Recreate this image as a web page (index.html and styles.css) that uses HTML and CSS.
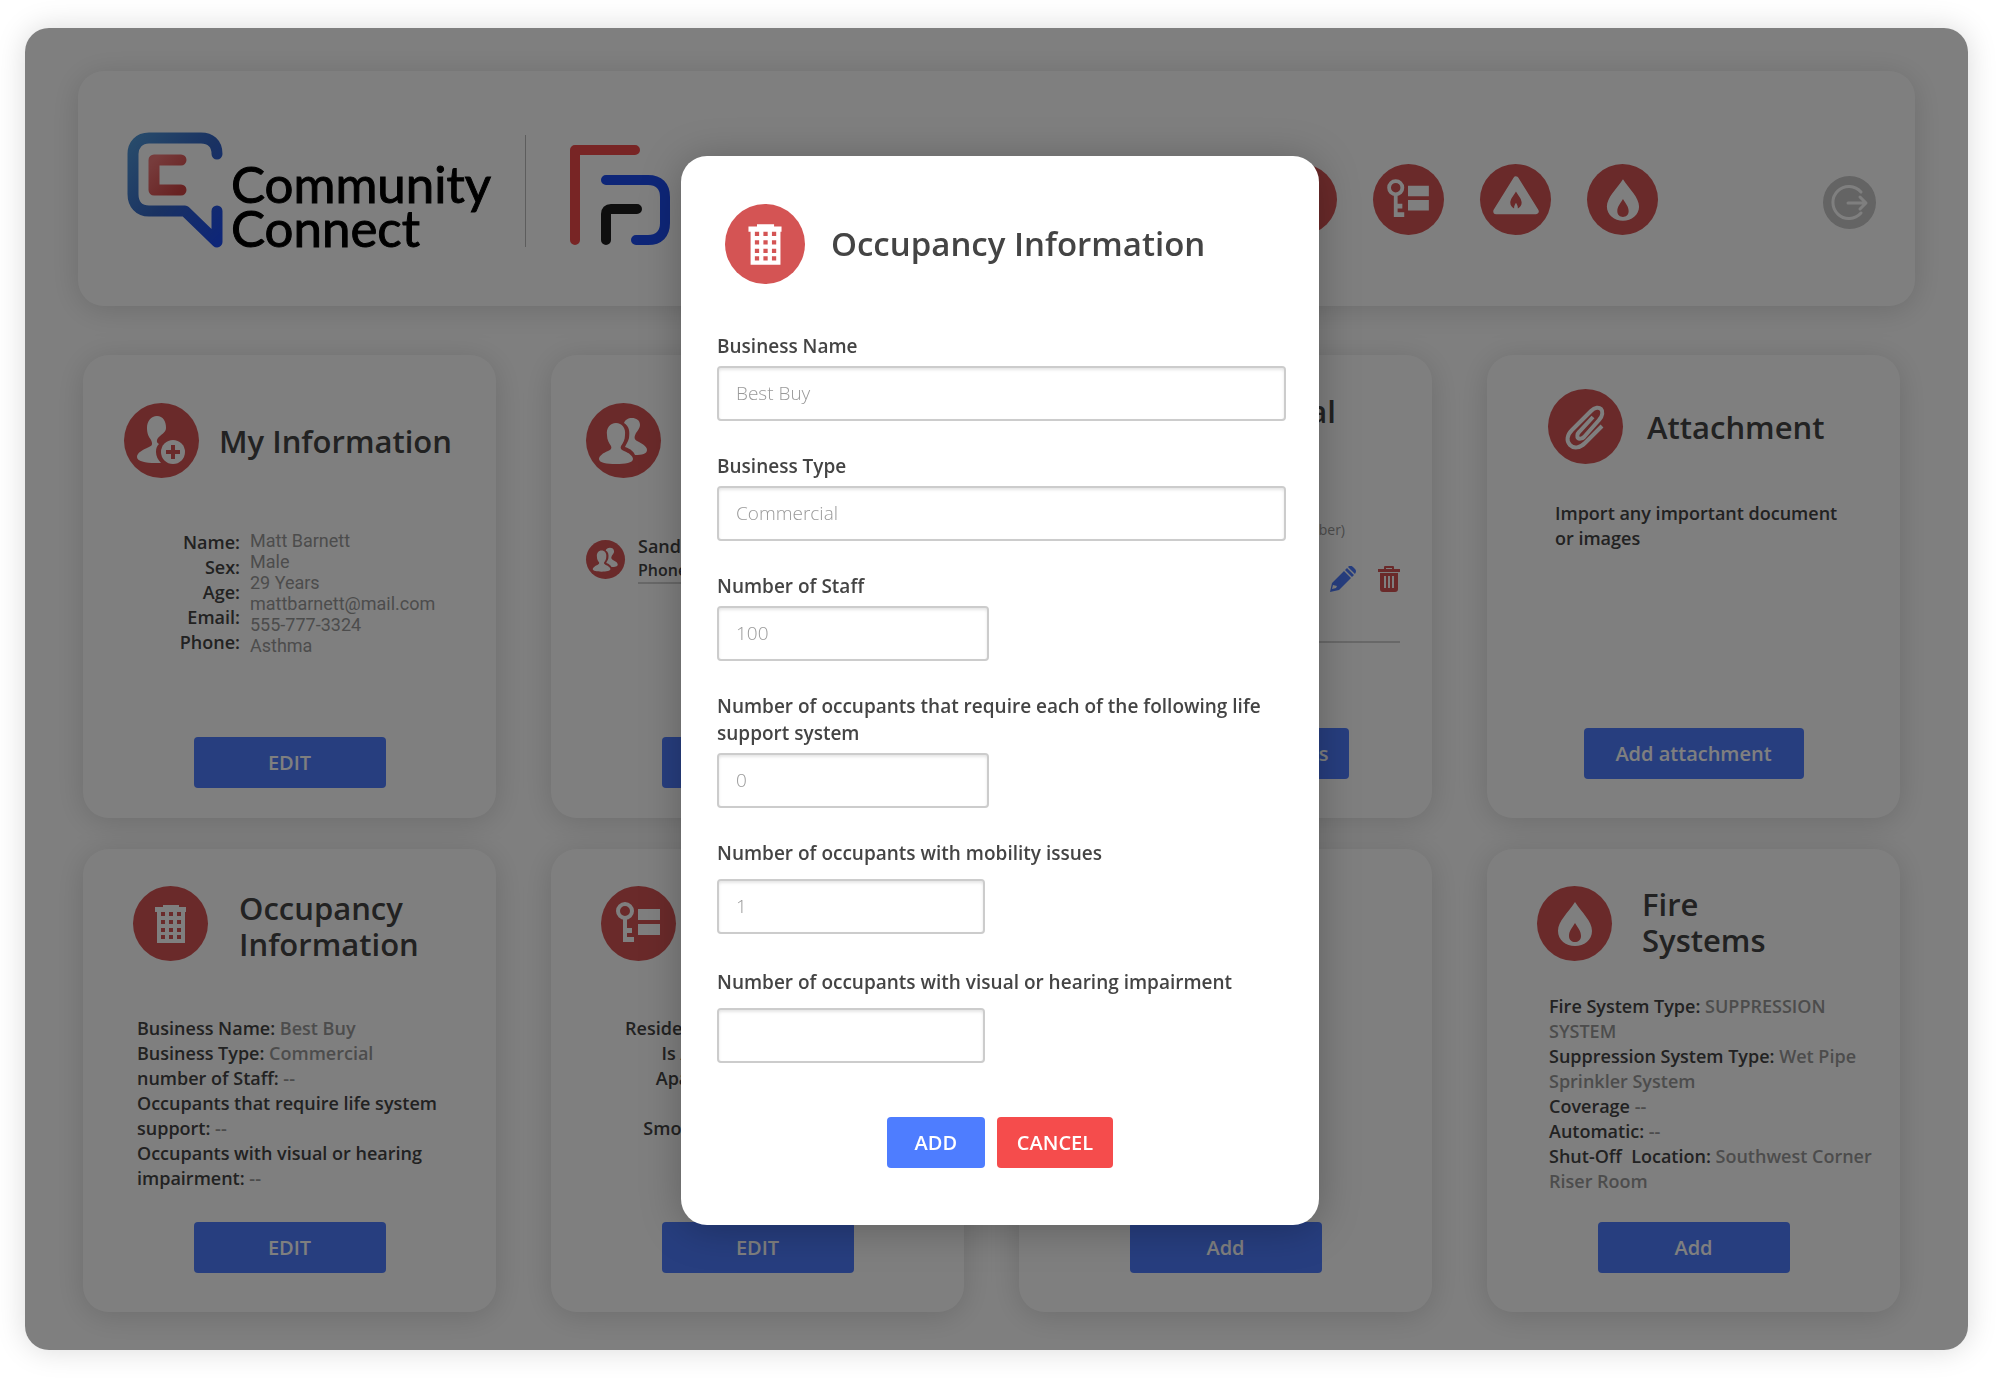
FILE: index.html
```html
<!DOCTYPE html>
<html lang="en">
<head>
    <meta charset="UTF-8">
    <meta name="viewport" content="width=device-width, initial-scale=1.0">
    <title>Community Connect</title>
    <link rel="stylesheet" href="styles.css">
</head>
<body>
    <!-- Shared icon shapes, all drawn in a 75x75 box -->
    <svg class="sprite" aria-hidden="true">
        <symbol id="icon-user-add" viewBox="0 0 75 75">
            <path fill="#fff" d="M33 13c-6 0-10 5-10 12 0 6 2 9 4 12 2 4 1 6-2 7-7 3-12 6-12 10 0 4 8 6 19 6h5c-3-3-5-7-5-11 0-4 1-6 3-8-2-1-3-3-1-6 2-3 8-5 8-10 0-7-3-12-9-12z"/>
            <circle cx="49" cy="49" r="12" fill="#fff"/>
            <path stroke="#d45454" stroke-width="4" d="M42 49h14M49 42v14"/>
        </symbol>
        <symbol id="icon-users" viewBox="0 0 75 75">
            <path fill="#fff" d="M46 15c-4 0-7 2-8 5 5 3 6 8 5 15-1 4-3 6-4 9 6 2 9 5 10 8 7 0 12-1 12-5 0-4-6-7-10-9-3-2-3-4-1-8 2-3 4-5 4-8 0-5-4-7-8-7z"/>
            <path fill="#fff" d="M30 20c-6 0-10 5-9 12 0 5 2 8 4 11 1 2 0 4-3 5-5 2-9 5-9 8 0 4 8 5 17 5s17-1 17-5c0-3-4-6-9-8-3-1-4-3-3-5 2-3 4-6 4-11 1-7-3-12-9-12z"/>
        </symbol>
        <symbol id="icon-building" viewBox="0 0 75 75">
            <path fill="#fff" fill-rule="evenodd" d="M30 19h16v2h7v5h-1v31H24V26h-2v-5h8zM28 26v4h4v-4zm8 0v4h4v-4zm8 0v4h4v-4zM28 34v4h4v-4zm8 0v4h4v-4zm8 0v4h4v-4zM28 42v4h4v-4zm8 0v4h4v-4zm8 0v4h4v-4zM28 49v4h4v-4zm8 0v4h4v-4zm8 0v4h4v-4z"/>
        </symbol>
        <symbol id="icon-key" viewBox="0 0 75 75">
            <circle cx="24" cy="25" r="7" fill="none" stroke="#fff" stroke-width="4"/>
            <path fill="#fff" d="M22 33h4v9h5v5h-5v4h7v5H22zM37 23h22v11H37zM37 38h22v11H37z"/>
        </symbol>
        <symbol id="icon-hazard" viewBox="0 0 75 75">
            <path fill="#fff" stroke="#fff" stroke-width="6" stroke-linejoin="round" d="M38 16l21 34H17z"/>
            <path fill="#d45454" d="M38 29c3 5 6 8 6 12 0 3-2 5-4 6 0-3-1-4-2-6-1 2-2 3-2 6-2-1-4-3-4-6 0-4 3-7 6-12z"/>
        </symbol>
        <symbol id="icon-drop" viewBox="0 0 75 75">
            <path fill="#fff" d="M38 16c7 11 17 19 17 29 0 9-8 15-17 15s-17-6-17-15c0-10 10-18 17-29z"/>
            <path fill="#d45454" d="M38 37c3 5 6 8 6 13 0 4-3 6-6 6s-6-2-6-6c0-5 3-8 6-13z"/>
        </symbol>
        <symbol id="icon-clip" viewBox="0 0 75 75">
            <path fill="none" stroke="#fff" stroke-width="4" d="M54 37L37 54c-5 5-11 6-15 2s-3-10 2-15l19-19c4-4 8-4 10-2s2 7-2 11L36 48c-2 2-5 2-6 1s-1-4 1-6l14-15"/>
        </symbol>
    </svg>

    <div class="dashboard">
        <header class="topbar">
            <svg class="logo-mark" viewBox="0 0 96 116" aria-hidden="true">
                <defs>
                    <linearGradient id="bubble" x1="0" y1="0" x2="1" y2="1">
                        <stop offset="0" stop-color="#4f96d6"/>
                        <stop offset=".5" stop-color="#3464c4"/>
                        <stop offset="1" stop-color="#1c4cf0"/>
                    </linearGradient>
                    <linearGradient id="inner" x1="0" y1="0" x2="1" y2="1">
                        <stop offset="0" stop-color="#ef7878"/>
                        <stop offset="1" stop-color="#cf4444"/>
                    </linearGradient>
                </defs>
                <path fill="none" stroke="url(#bubble)" stroke-width="11" stroke-linecap="round" stroke-linejoin="round" d="M90 22C90 11 83 6 74 6H22C12 6 6 13 6 22v40c0 10 6 17 16 17h36l32 31V79"/>
                <path fill="none" stroke="url(#inner)" stroke-width="11" stroke-linecap="round" stroke-linejoin="round" d="M54 28H27v30h27"/>
            </svg>
            <div class="logo-text">Community<br>Connect</div>
            <div class="divider"></div>
            <svg class="logo-fp" viewBox="0 0 100 100" aria-hidden="true">
                <g fill="none" stroke-width="10" stroke-linecap="round" stroke-linejoin="round">
                    <path stroke="#f04a4a" d="M5 95V5h60"/>
                    <path stroke="#1c4cf0" d="M36 35h42c11 0 17 6 17 17v26c0 11-6 17-17 17H66"/>
                    <path stroke="#1c1c1c" d="M36 95V69q0-5 5-5h26"/>
                </g>
            </svg>
            <nav class="topnav">
                <a href="#occupancy" class="badge" aria-label="Occupancy"><svg><use href="#icon-building"/></svg></a>
                <a href="#access" class="badge" aria-label="Property access"><svg><use href="#icon-key"/></svg></a>
                <a href="#hazard" class="badge" aria-label="Hazards"><svg><use href="#icon-hazard"/></svg></a>
                <a href="#fire" class="badge" aria-label="Fire systems"><svg><use href="#icon-drop"/></svg></a>
            </nav>
            <button type="button" class="logout" aria-label="Log out">
                <svg viewBox="0 0 53 53">
                    <path fill="none" stroke="#fff" stroke-width="3" stroke-linecap="round" stroke-linejoin="round" d="M38 16a16 16 0 1 0 0 21M25 27h17M37 21l6 6-6 6"/>
                </svg>
            </button>
        </header>

        <main class="cards">
            <section class="card card-person">
                <div class="card-head">
                    <span class="badge"><svg><use href="#icon-user-add"/></svg></span>
                    <h2>My Information</h2>
                </div>
                <div class="person">
                    <div class="person-labels">Name:<br>Sex:<br>Age:<br>Email:<br>Phone:</div>
                    <div class="person-values">Matt Barnett<br>Male<br>29 Years<br>mattbarnett@mail.com<br>555-777-3324<br>Asthma</div>
                </div>
                <button type="button" class="btn">EDIT</button>
            </section>

            <section class="card card-person card-contacts">
                <div class="card-head">
                    <span class="badge"><svg><use href="#icon-users"/></svg></span>
                    <h2>Contacts</h2>
                </div>
                <div class="contact">
                    <span class="badge badge-small"><svg><use href="#icon-users"/></svg></span>
                    <div class="contact-text">
                        <div>Sandra</div>
                        <div class="contact-phone">Phone:</div>
                    </div>
                </div>
                <button type="button" class="btn">EDIT</button>
            </section>

            <section class="card card-medical">
                <h2>Medical</h2>
                <div class="hint">(Number)</div>
                <div class="entry">
                    <a href="#edit" aria-label="Edit">
                        <svg class="icon-pencil" viewBox="0 0 26 26"><path fill="#4e7dff" fill-rule="evenodd" d="M2 17L14 5l7 7L9 24l-9 2zM3 19l-1 4 4-1 1-2zM15 4l2-2 7 7-2 2zM18 1l1-1q2-1 4 1l2 2q2 2 0 5z"/></svg>
                    </a>
                    <a href="#delete" aria-label="Delete">
                        <svg class="icon-trash" viewBox="0 0 22 26"><path fill="#d45454" fill-rule="evenodd" d="M0 3h6V1q0-1 1-1h8q1 0 1 1v2h6v3H0zM8 2v1h6V2zM2 7h18v16q0 3-3 3H5q-3 0-3-3zM6 10v12h2V10zm4 0v12h2V10zm4 0v12h2V10z"/></svg>
                    </a>
                </div>
                <button type="button" class="btn">Add medical contacts</button>
            </section>

            <section class="card card-attachment">
                <div class="card-head">
                    <span class="badge"><svg><use href="#icon-clip"/></svg></span>
                    <h2>Attachment</h2>
                </div>
                <p class="info">Import any important document or images</p>
                <button type="button" class="btn btn-wide">Add attachment</button>
            </section>

            <section class="card card-occupancy" id="occupancy">
                <div class="card-head">
                    <span class="badge"><svg><use href="#icon-building"/></svg></span>
                    <h2>Occupancy<br>Information</h2>
                </div>
                <div class="info">
                    Business Name: <span>Best Buy</span><br>
                    Business Type: <span>Commercial</span><br>
                    number of Staff: <span>--</span><br>
                    Occupants that require life system support: <span>--</span><br>
                    Occupants with visual or hearing impairment: <span>--</span>
                </div>
                <button type="button" class="btn">EDIT</button>
            </section>

            <section class="card card-occupancy card-access" id="access">
                <div class="card-head">
                    <span class="badge"><svg><use href="#icon-key"/></svg></span>
                    <h2>Property<br>Access</h2>
                </div>
                <div class="info">
                    Residence Type:<br>
                    Is Attached:<br>
                    Apartments:<br>
                    Units:<br>
                    Smoke Alarm:
                </div>
                <button type="button" class="btn">EDIT</button>
            </section>

            <section class="card card-occupancy card-hazard" id="hazard">
                <div class="card-head">
                    <span class="badge"><svg><use href="#icon-hazard"/></svg></span>
                    <h2>Hazards</h2>
                </div>
                <div class="info">Hazardous materials stored</div>
                <button type="button" class="btn">Add</button>
            </section>

            <section class="card card-fire" id="fire">
                <div class="card-head">
                    <span class="badge"><svg><use href="#icon-drop"/></svg></span>
                    <h2>Fire<br>Systems</h2>
                </div>
                <div class="info">
                    Fire System Type: <span>SUPPRESSION SYSTEM</span><br>
                    Suppression System Type: <span>Wet Pipe Sprinkler System</span><br>
                    Coverage <span>--</span><br>
                    Automatic: <span>--</span><br>
                    Shut-Off&nbsp; Location: <span>Southwest Corner Riser Room</span>
                </div>
                <button type="button" class="btn">Add</button>
            </section>
        </main>

        <div class="dim"></div>
    </div>

    <div class="modal-wrap">
        <form class="modal" role="dialog" aria-labelledby="modal-title">
            <div class="modal-head">
                <span class="badge badge-large"><svg><use href="#icon-building"/></svg></span>
                <h1 id="modal-title">Occupancy Information</h1>
            </div>
            <div class="field">
                <label for="business-name">Business Name</label>
                <input type="text" id="business-name" placeholder="Best Buy">
            </div>
            <div class="field">
                <label for="business-type">Business Type</label>
                <input type="text" id="business-type" placeholder="Commercial">
            </div>
            <div class="field field-short">
                <label for="staff">Number of Staff</label>
                <input type="text" id="staff" placeholder="100">
            </div>
            <div class="field field-short">
                <label for="life-support">Number of occupants that require each of the following life support system</label>
                <input type="text" id="life-support" placeholder="0">
            </div>
            <div class="field field-loose">
                <label for="mobility">Number of occupants with mobility issues</label>
                <input type="text" id="mobility" placeholder="1">
            </div>
            <div class="field field-loose">
                <label for="impairment">Number of occupants with visual or hearing impairment</label>
                <input type="text" id="impairment">
            </div>
            <div class="modal-actions">
                <button type="submit" class="btn btn-add">ADD</button>
                <button type="button" class="btn btn-cancel">CANCEL</button>
            </div>
        </form>
    </div>
</body>
</html>
```
FILE: styles.css
```css
* {
    box-sizing: border-box;
}
body {
    margin: 0;
    padding: 28px 32px 31px 25px;
    background: #fff;
    color: #444;
    font-family: "Open Sans", sans-serif;
    font-weight: 600;
}
h1, h2 {
    margin: 0;
    font-weight: 600;
}
h1 {
    font-size: 33px;
    line-height: 40px;
}
h2 {
    font-size: 31px;
    line-height: 36px;
}
.sprite {
    position: absolute;
    width: 0;
    height: 0;
}

/* page frame */
.dashboard {
    position: relative;
    padding: 43px 53px 38px;
    border-radius: 24px;
    overflow: hidden;
    background: #fff;
    box-shadow: 0 0 30px rgba(0,0,0,0.15);
}
.dim {
    position: absolute;
    inset: 0;
    background: rgba(0,0,0,0.5);
}

/* header */
.topbar {
    display: flex;
    align-items: center;
    min-height: 235px;
    padding: 0 39px 0 49px;
    border-radius: 26px;
    background: #fff;
    box-shadow: 0 4px 30px rgba(0,0,0,0.15);
}
.logo-mark {
    width: 96px;
    height: 116px;
    margin-top: 2px;
}
.logo-text {
    margin: 34px 34px 0 8px;
    color: #000;
    font-family: Lato, sans-serif;
    font-weight: 400;
    font-size: 51px;
    line-height: 44px;
    -webkit-text-stroke: 1px #000;
}
.divider {
    width: 1px;
    height: 112px;
    margin-top: 4px;
    background: #bbb;
}
.logo-fp {
    width: 100px;
    height: 100px;
    margin: 12px 0 0 44px;
}
.topnav {
    display: flex;
    gap: 36px;
    margin: 0 165px 0 auto;
    padding-top: 22px;
}
.topnav .badge {
    width: 71px;
    height: 71px;
}
.logout {
    width: 53px;
    height: 53px;
    margin-top: 28px;
    padding: 0;
    border: none;
    border-radius: 50%;
    background: #c8c8c8;
}
.logout svg {
    display: block;
}

/* round icons */
.badge {
    display: block;
    flex: none;
    width: 75px;
    height: 75px;
    border-radius: 50%;
    background: #d45454;
}
.badge svg {
    display: block;
    width: 100%;
    height: 100%;
}
.badge-small {
    width: 39px;
    height: 39px;
}
.badge-large {
    width: 80px;
    height: 80px;
}

/* cards */
.cards {
    display: grid;
    grid-template-columns: repeat(4, 1fr);
    gap: 31px 55px;
    padding: 49px 15px 0 5px;
}
.card {
    display: flex;
    flex-direction: column;
    min-height: 463px;
    padding: 34px 20px 39px 50px;
    border-radius: 26px;
    background: #fff;
    box-shadow: 0 4px 30px rgba(0,0,0,0.15);
}
.card-head {
    display: flex;
    align-items: center;
    gap: 24px;
    height: 75px;
}
.card .btn {
    align-self: center;
    margin-top: auto;
    margin-left: -30px;
}
.btn {
    min-width: 192px;
    height: 51px;
    padding: 0 20px;
    border: none;
    border-radius: 4px;
    background: #4e7dff;
    color: #fff;
    font-family: inherit;
    font-weight: 600;
    font-size: 20px;
}
.card .btn-wide {
    min-width: 220px;
}
.info {
    margin: 0;
    font-size: 18px;
    line-height: 25px;
}
.info span {
    color: #999;
}

.card-person {
    padding: 48px 20px 30px 41px;
}
.card-person .card-head {
    gap: 20px;
}
.card-person .btn {
    margin-left: -21px;
}
.person {
    display: flex;
    gap: 10px;
    margin-top: 52px;
}
.person-labels {
    width: 116px;
    font-size: 18px;
    line-height: 25px;
    text-align: right;
}
.person-values {
    color: #999;
    font-family: Roboto, sans-serif;
    font-weight: 400;
    font-size: 18px;
    line-height: 21px;
}

.card-contacts {
    padding-left: 35px;
}
.card-contacts .btn {
    margin-left: -15px;
}
.contact {
    display: flex;
    align-items: center;
    gap: 13px;
    margin-top: 56px;
}
.contact-text {
    flex: 1;
    border-bottom: 2px solid #d0d0d0;
    font-size: 18px;
    line-height: 24px;
}
.contact-phone {
    font-size: 16px;
}

.card-medical {
    padding-right: 32px;
}
.card-medical .btn {
    margin-left: -18px;
}
.card-medical h2 {
    padding: 4px 64px 0 0;
    text-align: right;
}
.hint {
    margin-top: 91px;
    padding-right: 55px;
    color: #999;
    font-weight: 400;
    font-size: 14px;
    line-height: 20px;
    text-align: right;
}
.entry {
    display: flex;
    justify-content: flex-end;
    gap: 22px;
    height: 83px;
    margin-top: 20px;
    padding-top: 6px;
    border-bottom: 2px solid #d0d0d0;
}
.icon-pencil {
    width: 26px;
    height: 26px;
}
.icon-trash {
    width: 22px;
    height: 26px;
}

.card-attachment {
    padding-left: 61px;
}
.card-attachment .info {
    margin-top: 37px;
    padding: 0 30px 0 7px;
}
.card-attachment .btn {
    margin-left: -41px;
}

.card-occupancy,
.card-fire {
    padding-top: 37px;
}
.card-occupancy .card-head {
    gap: 31px;
}
.card-occupancy h2 {
    padding-top: 4px;
}
.card-occupancy .info {
    margin-top: 55px;
    padding-left: 4px;
}
.card-access .info {
    padding-right: 180px;
    text-align: right;
}
.card-fire .card-head {
    gap: 30px;
}
.card-fire h2 {
    padding-bottom: 4px;
}
.card-fire .info {
    margin-top: 33px;
    padding-left: 12px;
}

/* modal */
.modal-wrap {
    position: fixed;
    inset: 0;
    display: flex;
    align-items: center;
    justify-content: center;
}
.modal {
    width: 100%;
    max-width: 638px;
    padding: 48px 33px 57px 36px;
    border-radius: 26px;
    background: #fff;
    box-shadow: 0 4px 40px rgba(0,0,0,0.25);
}
.modal-head {
    display: flex;
    align-items: center;
    gap: 26px;
    margin-bottom: 49px;
    padding-left: 8px;
}
.field {
    margin-bottom: 32px;
}
.field label {
    display: block;
    margin-bottom: 6px;
    font-size: 19px;
    line-height: 27px;
}
.field input {
    display: block;
    width: 100%;
    height: 55px;
    padding: 0 17px 2px;
    border: 2px solid #ccc;
    border-radius: 4px;
    background: #fff;
    box-shadow: inset 0 2px 3px rgba(0,0,0,0.1);
    color: #444;
    font-family: inherit;
    font-weight: 300;
    font-size: 19px;
}
.field input::placeholder {
    color: #999;
}
.field-short input {
    width: 272px;
}
.field-loose {
    margin-bottom: 35px;
}
.field-loose label {
    margin-bottom: 12px;
}
.field-loose input {
    width: 268px;
}
.modal-actions {
    display: flex;
    justify-content: center;
    gap: 12px;
    margin-top: 54px;
    padding-right: 3px;
}
.modal-actions .btn {
    min-width: 98px;
}
.modal-actions .btn-cancel {
    background: #f54c4c;
}
```
